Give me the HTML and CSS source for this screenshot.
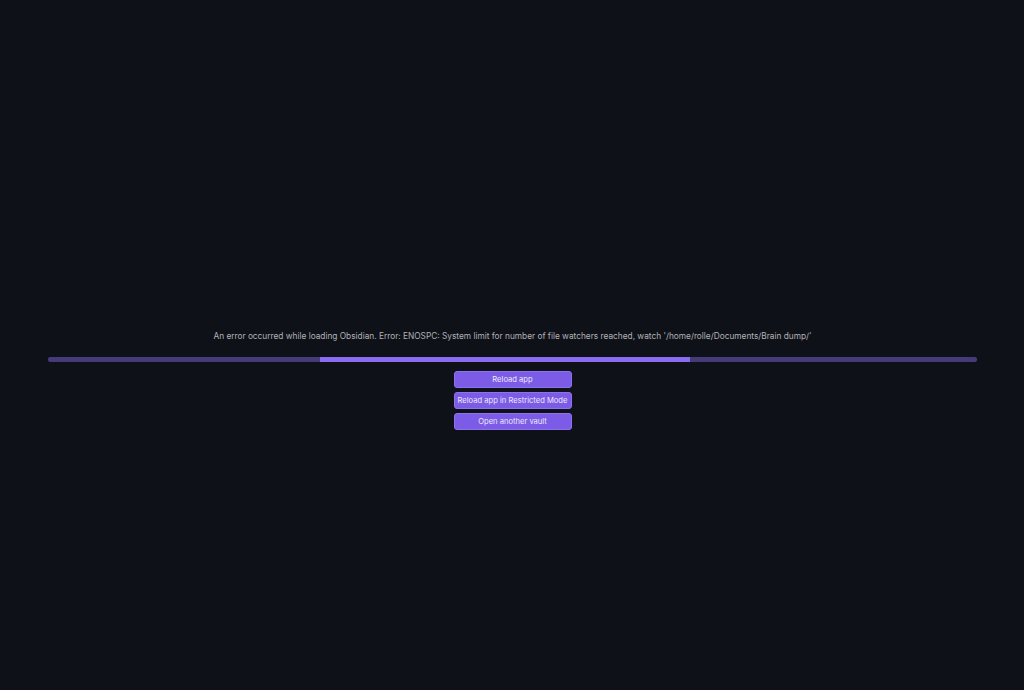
FILE: index.html
```html
<!DOCTYPE html>
<html>
<head>
<meta charset="utf-8">
<link rel="stylesheet" href="styles.css">
</head>
<body>
<div class="screen">
  <div class="message">An error occurred while loading Obsidian. Error: ENOSPC: System limit for number of file watchers reached, watch '/home/rolle/Documents/Brain dump/'</div>
  <div class="progress"><div class="progress-fill"></div></div>
  <div class="actions">
    <button class="btn">Reload app</button>
    <button class="btn">Reload app in Restricted Mode</button>
    <button class="btn">Open another vault</button>
  </div>
</div>
</body>
</html>
```
FILE: styles.css
```css
html, body {
  margin: 0;
  padding: 0;
  height: 100%;
  background: #0f1118;
}
.screen {
  height: 690px;
  box-sizing: border-box;
  padding: 330px 47px 0 48px;
  display: flex;
  flex-direction: column;
  align-items: center;
  font-family: Inter, "Noto Sans", sans-serif;
}
.message {
  color: #b2b2b6;
  font-size: 8.3px;
  line-height: 12px;
  text-align: center;
}
.progress {
  align-self: stretch;
  margin-top: 15px;
  height: 5px;
  border-radius: 2px;
  background: #463a78;
  position: relative;
}
.progress-fill {
  position: absolute;
  left: 272px;
  width: 370px;
  top: 0;
  bottom: 0;
  background: #8a6cf0;
}
.actions {
  margin-top: 9px;
  display: flex;
  flex-direction: column;
  gap: 4px;
}
.btn {
  width: 118px;
  height: 17px;
  padding: 0;
  border: 1px solid #8d72f0;
  border-radius: 3px;
  background: #7c5ce6;
  color: #ece8fb;
  font-family: Inter, "Noto Sans", sans-serif;
  font-size: 7.6px;
}
```
